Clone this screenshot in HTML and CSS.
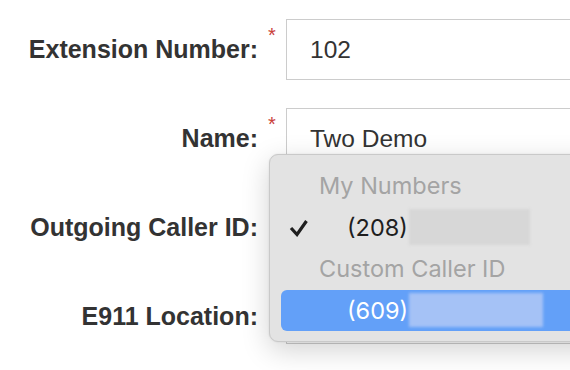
FILE: index.html
```html
<!DOCTYPE html>
<html>
<head>
<meta charset="utf-8">
<link rel="stylesheet" href="styles.css">
</head>
<body>
<div class="page">
  <form class="form">
    <div class="row">
      <label class="label">Extension Number:</label>
      <span class="req">*</span>
      <div class="field">102</div>
    </div>
    <div class="row">
      <label class="label">Name:</label>
      <span class="req">*</span>
      <div class="field">Two Demo</div>
    </div>
    <div class="row">
      <label class="label">Outgoing Caller ID:</label>
      <span class="req"></span>
      <div class="field select"></div>
    </div>
    <div class="row">
      <label class="label">E911 Location:</label>
      <span class="req"></span>
      <div class="field select short"></div>
    </div>
  </form>

  <div class="popup">
    <div class="group">My Numbers</div>
    <div class="option">
      <svg class="check" width="20" height="18" viewBox="0 0 20 18"><polyline points="2,9 8,15.5 17.5,2" fill="none" stroke="#1f1f1f" stroke-width="3.2" stroke-linecap="butt" stroke-linejoin="miter"/></svg>
      <span class="num">(208)</span><span class="blur gray"></span>
    </div>
    <div class="group">Custom Caller ID</div>
    <div class="option active">
      <span class="num">(609)</span><span class="blur blue"></span>
    </div>
  </div>
</div>
</body>
</html>
```
FILE: styles.css
```css
html, body {
  margin: 0;
  padding: 0;
  background: #ffffff;
  overflow: hidden;
}
.page {
  position: relative;
  width: 570px;
  height: 370px;
  overflow: hidden;
  font-family: "Liberation Sans", Arial, sans-serif;
}
.form {
  display: flex;
  flex-direction: column;
  gap: 28px;
  padding-top: 19px;
  width: 700px;
}
.row {
  display: flex;
  align-items: center;
  height: 61px;
}
.label {
  width: 258px;
  text-align: right;
  font-weight: bold;
  font-size: 25px;
  color: #333333;
}
.req {
  align-self: flex-start;
  width: 28px;
  box-sizing: border-box;
  padding-left: 10px;
  padding-top: 6px;
  color: #c9403a;
  font-size: 20px;
  line-height: 1;
}
.field {
  box-sizing: border-box;
  height: 61px;
  width: 400px;
  border: 1px solid #cccccc;
  padding-left: 23px;
  display: flex;
  align-items: center;
  font-size: 24.5px;
  color: #333333;
}
.field.short {
  height: 58px;
  align-self: flex-start;
}
.popup {
  position: absolute;
  left: 269px;
  top: 154px;
  width: 340px;
  height: 188px;
  box-sizing: border-box;
  padding: 10px 0 10px 11px;
  background: #e3e3e3;
  border: 1px solid #c9c9c9;
  border-radius: 9px;
  box-shadow: 0 8px 28px rgba(0, 0, 0, 0.18), 0 0 2px rgba(0, 0, 0, 0.1);
  font-family: Inter, "Noto Sans", sans-serif;
  font-size: 23.5px;
  display: flex;
  flex-direction: column;
}
.group {
  height: 42px;
  display: flex;
  align-items: center;
  padding-left: 38px;
  color: #a4a4a4;
}
.option {
  position: relative;
  height: 42px;
  display: flex;
  align-items: center;
  padding-left: 66px;
  color: #1e1e1e;
  border-radius: 6px 0 0 6px;
}
.option.active {
  background: #63a0f8;
  color: #ffffff;
}
.check {
  position: absolute;
  left: 8px;
  top: 12px;
}
.blur {
  display: inline-block;
  height: 36px;
  margin-left: 1px;
  filter: blur(1.5px);
}
.blur.gray {
  width: 121px;
  background: #d7d7d7;
}
.blur.blue {
  width: 134px;
  height: 34px;
  background: #a5c2f6;
}
```
